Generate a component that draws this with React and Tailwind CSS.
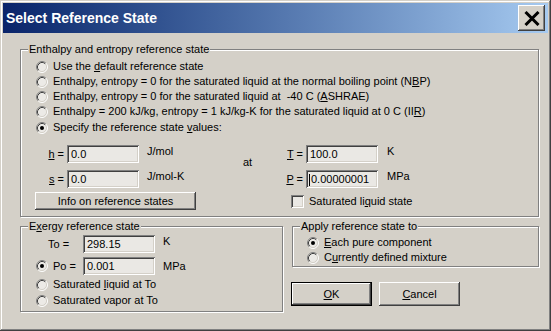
import React from 'react';

const SUNKEN = 'shadow-[inset_1px_1px_0_#808080,inset_-1px_-1px_0_#ffffff,inset_2px_2px_0_#404040,inset_-2px_-2px_0_#d4d0c8]';
const RAISED = 'shadow-[inset_-1px_-1px_0_#404040,inset_1px_1px_0_#ffffff,inset_-2px_-2px_0_#808080,inset_2px_2px_0_#d4d0c8]';

function Radio({ checked }) {
  return (
    <svg width="12" height="12" viewBox="0 0 12 12" className="shrink-0">
      <circle cx="6" cy="6" r="5" fill="#eceae6" />
      <path d="M2.11 9.89 A5.5 5.5 0 0 1 9.89 2.11" stroke="#808080" fill="none" />
      <path d="M9.89 2.11 A5.5 5.5 0 0 1 2.11 9.89" stroke="#ffffff" fill="none" />
      <path d="M2.82 9.18 A4.5 4.5 0 0 1 9.18 2.82" stroke="#404040" fill="none" />
      <path d="M9.18 2.82 A4.5 4.5 0 0 1 2.82 9.18" stroke="#d4d0c8" fill="none" />
      {checked && <circle cx="6" cy="6" r="2" fill="#000" />}
    </svg>
  );
}

function RadioRow({ checked, children, className = '' }) {
  return (
    <div className={`flex items-center h-[15px] gap-[5px] ${className}`}>
      <Radio checked={checked} />
      <span className="whitespace-nowrap">{children}</span>
    </div>
  );
}

function Field({ value, caret }) {
  return (
    <div className={`w-[72px] h-[18px] bg-[#eae8e4] ${SUNKEN} flex items-center pt-[1px] ${caret ? 'pl-[3px]' : 'pl-[4px]'}`}>
      {caret && <span className="w-px h-[12px] bg-black mr-px" />}
      <span>{value}</span>
    </div>
  );
}

function Group({ label, className = '', children }) {
  return (
    <div className={`relative border border-[#808080] shadow-[1px_1px_0_#ffffff,inset_1px_1px_0_#ffffff] ${className}`}>
      <span className="absolute left-[7px] -top-[7px] bg-[#d4d0c8] px-[1px] leading-[13px] whitespace-nowrap">{label}</span>
      {children}
    </div>
  );
}

export default function App() {
  return (
    <div className="w-[551px] h-[331px] bg-[#d4d0c8] p-[3px] shadow-[inset_-1px_-1px_0_#404040,inset_1px_1px_0_#d4d0c8,inset_-2px_-2px_0_#808080,inset_2px_2px_0_#ffffff] flex flex-col font-['Liberation_Sans',Arial,sans-serif] text-[11px] leading-[13px] text-black">
      {/* Title bar */}
      <div className="h-[30px] bg-linear-to-r from-[#0a246a] to-[#a6caf0] flex items-center justify-between pl-[3px] pr-[3px]">
        <span className="text-white font-bold text-[14px] leading-[16px]">Select Reference State</span>
        <div className={`w-[27px] h-[26px] bg-[#d4d0c8] ${RAISED} flex items-center justify-center`}>
          <svg width="16" height="15" viewBox="0 0 16 15">
            <path d="M1.5 1 L14.5 14 M14.5 1 L1.5 14" stroke="#000" strokeWidth="3" />
          </svg>
        </div>
      </div>

      {/* Body */}
      <div className="flex flex-col pl-[17px] pt-[16px]">
        <Group label="Enthalpy and entropy reference state" className="w-[519px] h-[168px] flex flex-col pt-[9px]">
          <RadioRow className="ml-[15px]">Use the <u>d</u>efault reference state</RadioRow>
          <RadioRow className="ml-[15px]">Enthalpy, entropy = 0 for the saturated liquid at the normal boiling point (N<u>B</u>P)</RadioRow>
          <RadioRow className="ml-[15px]">Enthalpy, entropy = 0 for the saturated liquid at&nbsp; -40 C (<u>A</u>SHRAE)</RadioRow>
          <RadioRow className="ml-[15px]">Enthalpy = 200 kJ/kg, entropy = 1 kJ/kg-K for the saturated liquid at 0 C (II<u>R</u>)</RadioRow>
          <RadioRow className="ml-[15px] mt-[1px]" checked>Specify the reference state <u>v</u>alues:</RadioRow>

          <div className="flex ml-[15px] mt-[10px]">
            <div className="w-[207px] flex flex-col gap-[7px]">
              <div className="flex">
                <span className="w-[28px] text-right self-center"><u>h</u> =</span>
                <div className="ml-[3px]"><Field value="0.0" /></div>
                <span className="ml-[8px]">J/mol</span>
              </div>
              <div className="flex">
                <span className="w-[28px] text-right self-center"><u>s</u> =</span>
                <div className="ml-[3px]"><Field value="0.0" /></div>
                <span className="ml-[8px]">J/mol-K</span>
              </div>
            </div>
            <span className="mt-[11px] w-[40px]">at</span>
            <div className="flex flex-col gap-[7px]">
              <div className="flex">
                <span className="w-[20px] text-right self-center"><u>T</u> =</span>
                <div className="ml-[3px]"><Field value="100.0" /></div>
                <span className="ml-[9px]">K</span>
              </div>
              <div className="flex">
                <span className="w-[20px] text-right self-center"><u>P</u> =</span>
                <div className="ml-[3px]"><Field value="0.00000001" caret /></div>
                <span className="ml-[9px]">MPa</span>
              </div>
            </div>
          </div>

          <div className="flex items-center ml-[14px] mt-[4px]">
            <div className={`w-[161px] h-[18px] ${RAISED} flex items-center justify-center`}>Info on reference states</div>
            <div className={`ml-[95px] w-[13px] h-[13px] bg-[#eae8e4] ${SUNKEN}`} />
            <span className="ml-[5px]">Saturated li<u>q</u>uid state</span>
          </div>
        </Group>

        <div className="flex mt-[9px]">
          <Group label={<>E<u>x</u>ergy reference state</>} className="w-[263px] h-[86px] flex flex-col pt-[8px]">
            <div className="flex ml-[27px]">
              <span className="w-[35px] self-center">To =</span>
              <Field value="298.15" />
              <span className="ml-[8px]">K</span>
            </div>
            <div className="flex ml-[15px] mt-[4px]">
              <div className="flex items-center gap-[5px] w-[47px]">
                <Radio checked />
                <span>Po =</span>
              </div>
              <Field value="0.001" />
              <span className="ml-[8px] self-center">MPa</span>
            </div>
            <RadioRow className="ml-[15px] mt-[2px]">Saturated <u>l</u>iquid at To</RadioRow>
            <RadioRow className="ml-[15px] mt-[1px]">Saturated vapor at To</RadioRow>
          </Group>

          <div className="flex flex-col ml-[8px]">
            <Group label="Apply reference state to" className="ml-[1px] w-[247px] h-[41px] flex flex-col pt-[8px]">
              <RadioRow className="ml-[14px]" checked><u>E</u>ach pure component</RadioRow>
              <RadioRow className="ml-[14px]">C<u>u</u>rrently defined mixture</RadioRow>
            </Group>
            <div className="flex mt-[15px] gap-[7px]">
              <div className="w-[81px] h-[24px] border border-black">
                <div className={`w-full h-full ${RAISED} flex items-center justify-center`}><span><u>O</u>K</span></div>
              </div>
              <div className={`w-[81px] h-[24px] ${RAISED} flex items-center justify-center`}><span><u>C</u>ancel</span></div>
            </div>
          </div>
        </div>
      </div>
    </div>
  );
}
